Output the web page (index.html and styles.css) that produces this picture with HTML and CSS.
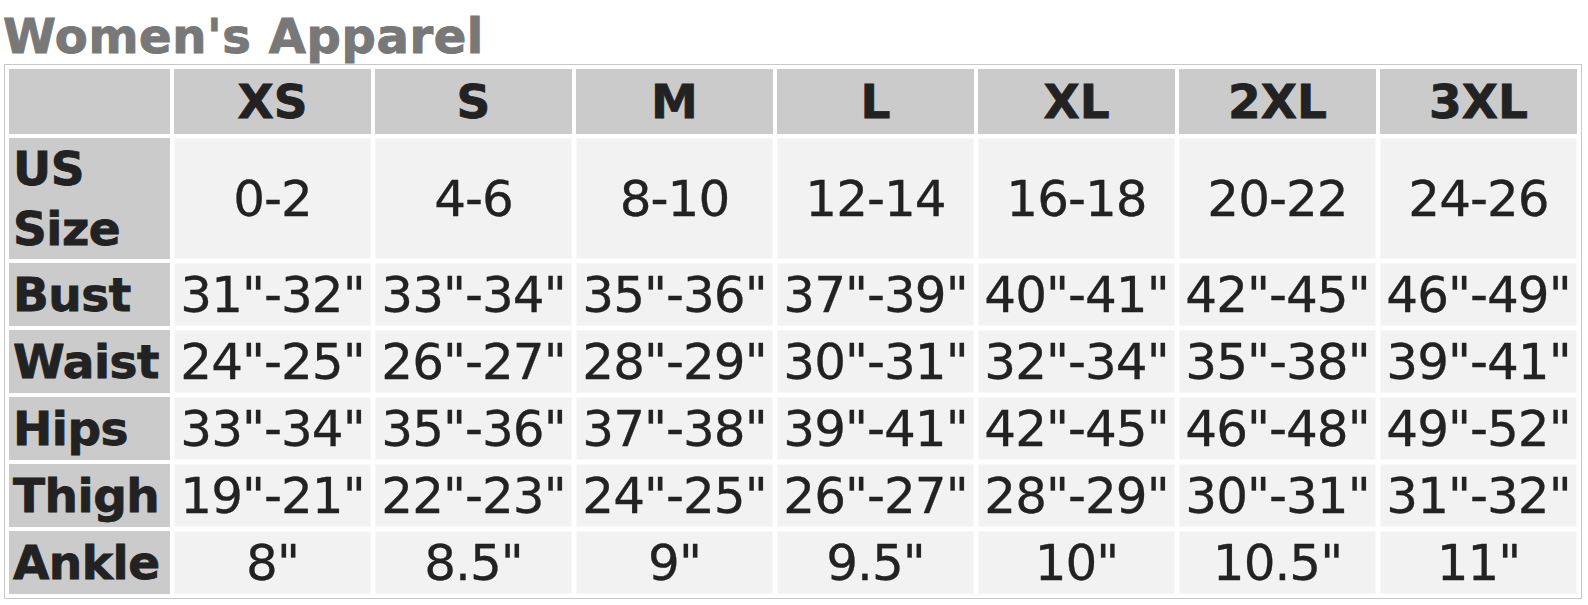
FILE: index.html
```html
<!DOCTYPE html>
<html>
<head>
<meta charset="utf-8">
<title>Women's Apparel</title>
<link rel="stylesheet" href="styles.css">
</head>
<body>
<h1 class="title">Women's Apparel</h1>
<table class="chart">
  <colgroup>
    <col class="col-label">
    <col class="col-size"><col class="col-size"><col class="col-size"><col class="col-size"><col class="col-size"><col class="col-size"><col class="col-size">
  </colgroup>
  <thead>
    <tr class="row-head">
      <th class="corner"></th>
      <th>XS</th><th>S</th><th>M</th><th>L</th><th>XL</th><th>2XL</th><th>3XL</th>
    </tr>
  </thead>
  <tbody>
    <tr class="row-tall">
      <th class="label label-two">US<br>Size</th>
      <td>0-2</td><td>4-6</td><td>8-10</td><td>12-14</td><td>16-18</td><td>20-22</td><td>24-26</td>
    </tr>
    <tr class="row">
      <th class="label">Bust</th>
      <td>31"-32"</td><td>33"-34"</td><td>35"-36"</td><td>37"-39"</td><td>40"-41"</td><td>42"-45"</td><td>46"-49"</td>
    </tr>
    <tr class="row">
      <th class="label">Waist</th>
      <td>24"-25"</td><td>26"-27"</td><td>28"-29"</td><td>30"-31"</td><td>32"-34"</td><td>35"-38"</td><td>39"-41"</td>
    </tr>
    <tr class="row">
      <th class="label">Hips</th>
      <td>33"-34"</td><td>35"-36"</td><td>37"-38"</td><td>39"-41"</td><td>42"-45"</td><td>46"-48"</td><td>49"-52"</td>
    </tr>
    <tr class="row">
      <th class="label">Thigh</th>
      <td>19"-21"</td><td>22"-23"</td><td>24"-25"</td><td>26"-27"</td><td>28"-29"</td><td>30"-31"</td><td>31"-32"</td>
    </tr>
    <tr class="row">
      <th class="label">Ankle</th>
      <td>8"</td><td>8.5"</td><td>9"</td><td>9.5"</td><td>10"</td><td>10.5"</td><td>11"</td>
    </tr>
  </tbody>
</table>
</body>
</html>
```

FILE: styles.css
```css
html, body {
  margin: 0;
  padding: 0;
  background: #ffffff;
}

body {
  font-family: "DejaVu Sans", Verdana, sans-serif;
  color: #222222;
}

.title {
  margin: 0;
  padding: 8px 0 0 3px;
  height: 64px;
  box-sizing: border-box;
  font-size: 48px;
  line-height: 56px;
  font-weight: bold;
  color: #787878;
  letter-spacing: 0.6px;
  -webkit-text-stroke: 1px #787878;
  white-space: nowrap;
}

.chart {
  margin-left: 4px;
  width: 1578px;
  table-layout: fixed;
  border-collapse: separate;
  border-spacing: 4px;
  border: 1px solid #c8c8c8;
}

.col-label {
  width: 161px;
}

.col-size {
  width: 197px;
}

.chart th,
.chart td {
  padding: 0;
  white-space: nowrap;
  overflow: hidden;
}

.chart th {
  background: #cbcbcb;
  font-size: 47px;
  font-weight: bold;
  color: #222222;
  -webkit-text-stroke: 0.8px #222222;
  text-align: center;
}

.chart td {
  background: #f2f2f2;
  box-shadow: inset 0 0 0 1px #f8f8f8;
  font-size: 50px;
  letter-spacing: -1px;
  color: #222222;
  -webkit-text-stroke: 0.3px #222222;
  text-align: center;
}

.row-head {
  height: 65px;
}

.row-tall {
  height: 121px;
}

.row {
  height: 63px;
}

.chart .label {
  text-align: left;
  padding-left: 4px;
  font-size: 47px;
  letter-spacing: -0.5px;
}

.chart .label-two {
  line-height: 60px;
}
```
